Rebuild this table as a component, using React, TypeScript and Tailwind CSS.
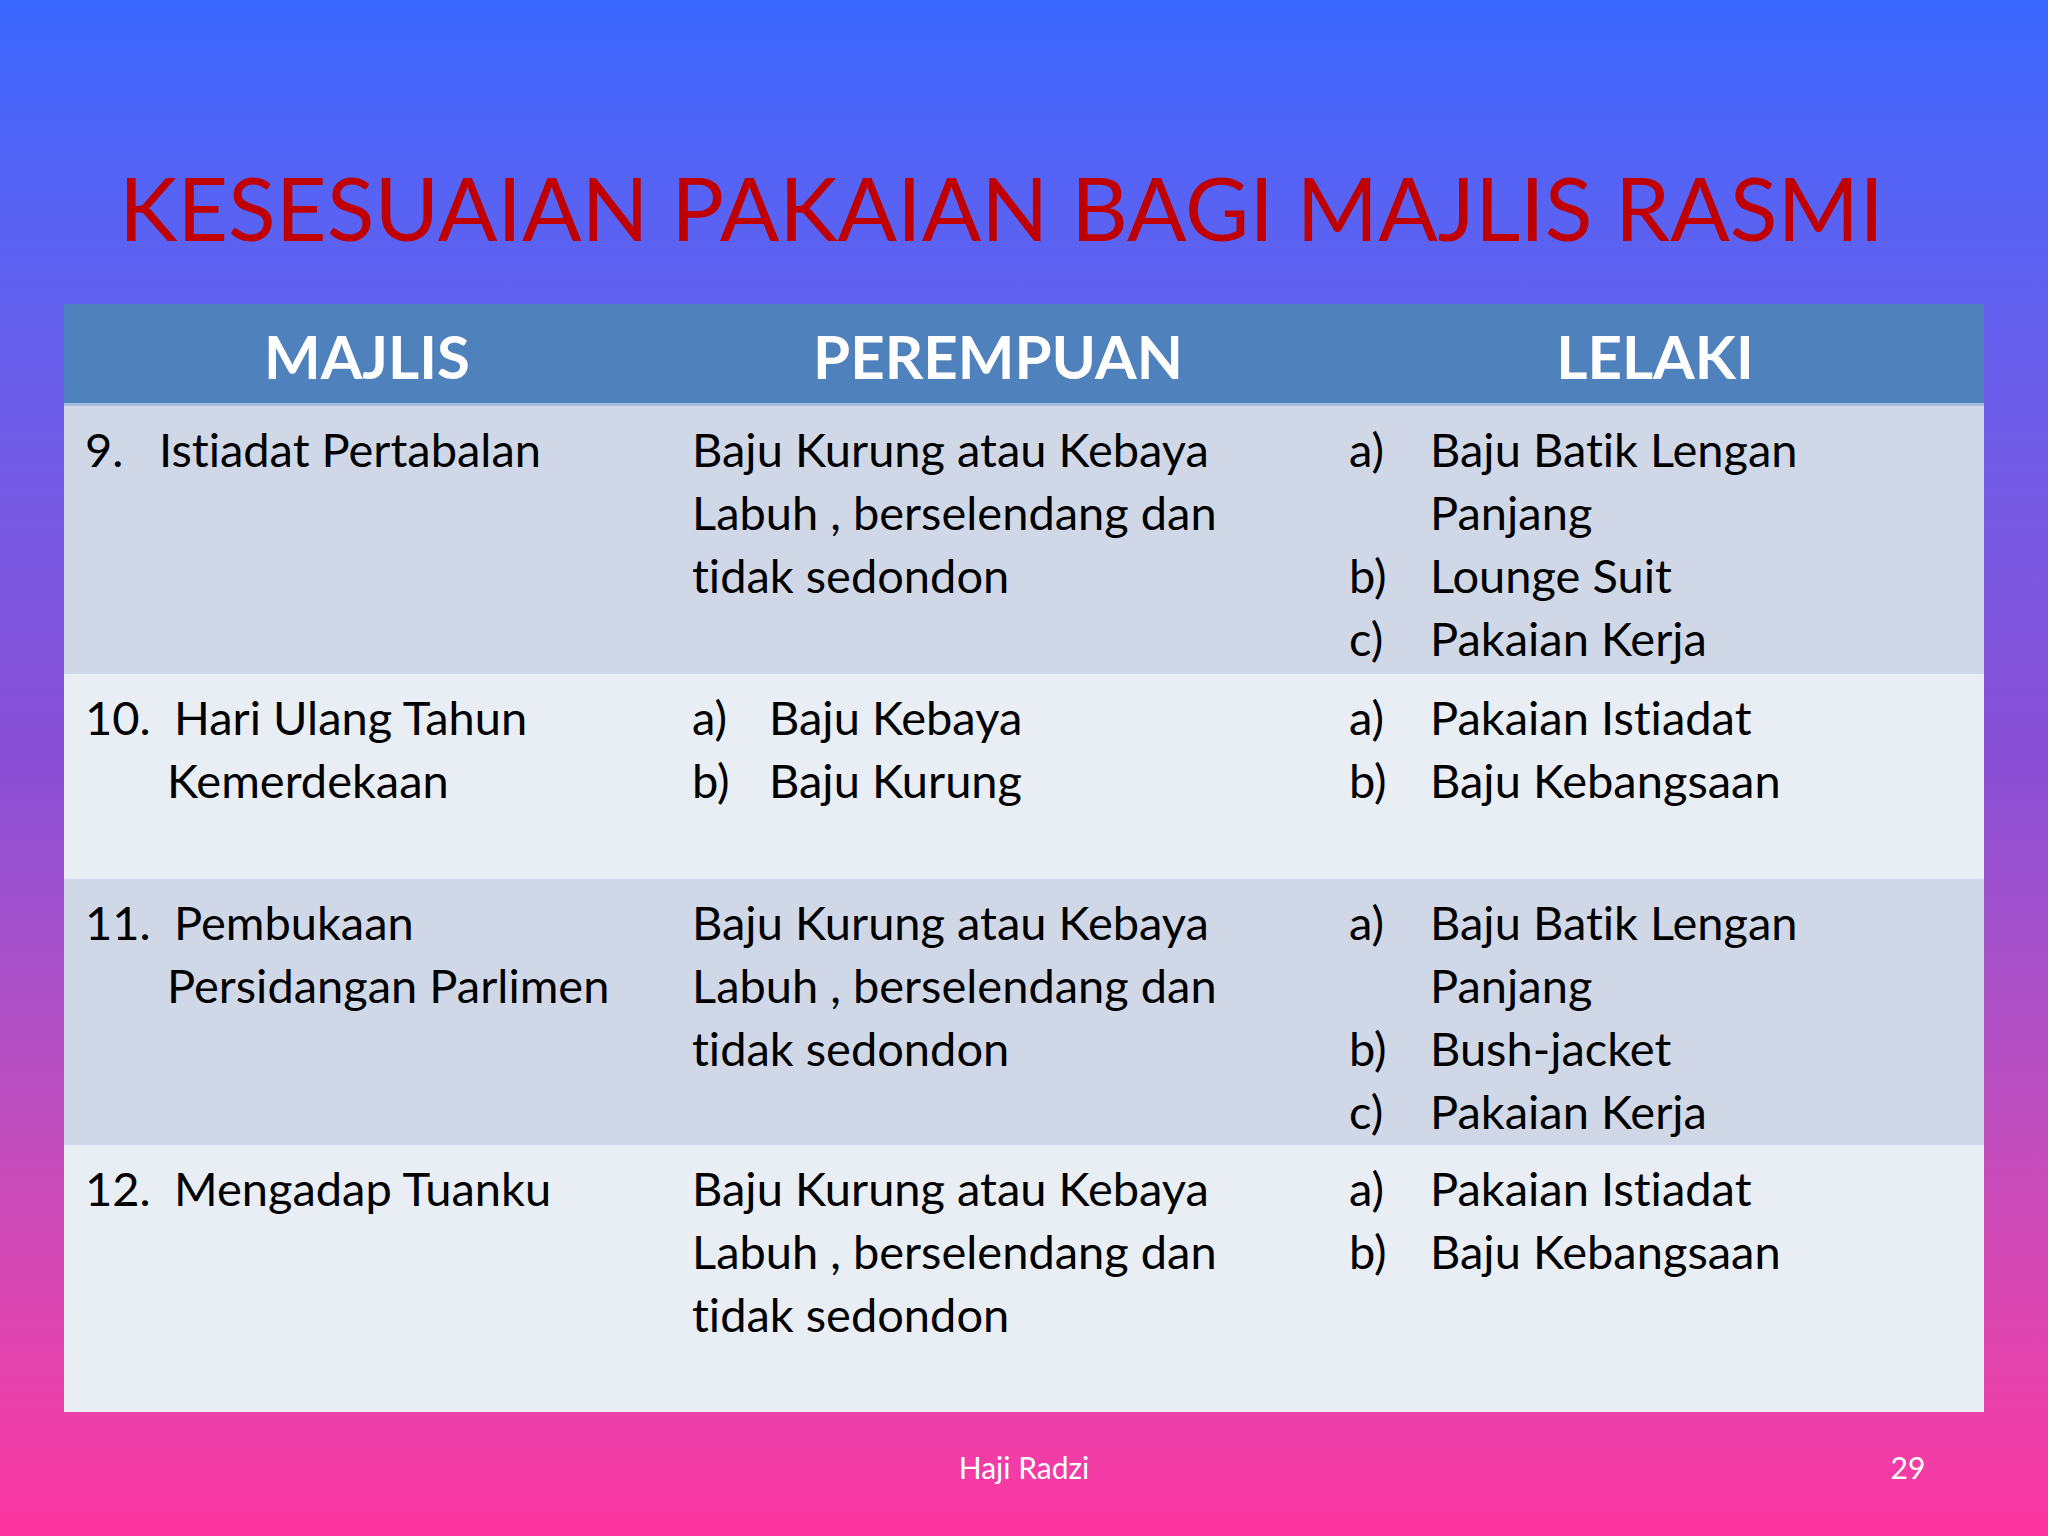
import React from "react";

const font = { fontFamily: "Lato, 'Open Sans', sans-serif" };

function Line({ children, indent = 0 }: { children: React.ReactNode; indent?: number }) {
  return <div className="whitespace-nowrap" style={indent ? { paddingLeft: indent } : undefined}>{children}</div>;
}

function Num({ n, w, children }: { n: string; w: string; children: React.ReactNode }) {
  return (
    <div className="flex whitespace-nowrap">
      <span className={w}>{n}</span>
      <span>{children}</span>
    </div>
  );
}

function Item2({ m, children }: { m: string; children: React.ReactNode }) {
  return (
    <div className="flex whitespace-nowrap">
      <span className="w-[77px] shrink-0">{m}</span>
      <div>{children}</div>
    </div>
  );
}

function Item3({ m, children }: { m: string; children: React.ReactNode }) {
  return (
    <div className="flex whitespace-nowrap">
      <span className="w-[81px] shrink-0">{m}</span>
      <div>{children}</div>
    </div>
  );
}

const cell1 = "pl-[21px] pt-[12px]";
const cell2 = "pl-[22px] pt-[12px]";
const cell3 = "pl-[23px] pt-[12px]";

function Kurung() {
  return (
    <>
      <Line>Baju Kurung atau Kebaya</Line>
      <Line>Labuh , berselendang dan</Line>
      <Line>tidak sedondon</Line>
    </>
  );
}

export default function App() {
  return (
    <div
      className="w-[2048px] h-[1536px] flex flex-col bg-gradient-to-b from-[#3a68ff] via-[#8a4fd5] to-[#fe34a0] overflow-hidden [font-variant-ligatures:none]"
      style={font}
    >
      <div className="h-[304px] flex items-start pl-[119px] pt-[157px]">
        <h1 className="text-[88px] leading-[100px] text-[#c00000] whitespace-nowrap">KESESUAIAN PAKAIAN BAGI MAJLIS RASMI</h1>
      </div>
      <div className="mx-[64px] w-[1920px] text-[47px] leading-[63px] text-black">
        <div className="grid grid-cols-[606px_656px_658px] h-[102px] bg-[#4f81bd] text-white font-bold text-[60px] items-center border-b-[3px] border-[#a7bde0] pt-[6px]">
          <div className="text-center">MAJLIS</div>
          <div className="text-center">PEREMPUAN</div>
          <div className="text-center">LELAKI</div>
        </div>
        <div className="grid grid-cols-[606px_656px_658px] h-[268px] bg-[#d0d8e8]">
          <div className={cell1}>
            <Num n="9." w="w-[74px]">Istiadat Pertabalan</Num>
          </div>
          <div className={cell2}>
            <Kurung />
          </div>
          <div className={cell3}>
            <Item3 m="a)">
              <Line>Baju Batik Lengan</Line>
              <Line>Panjang</Line>
            </Item3>
            <Item3 m="b)">Lounge Suit</Item3>
            <Item3 m="c)">Pakaian Kerja</Item3>
          </div>
        </div>
        <div className="grid grid-cols-[606px_656px_658px] h-[205px] bg-[#e9edf4]">
          <div className={cell1}>
            <Num n="10." w="w-[89px]">Hari Ulang Tahun</Num>
            <Line indent={82}>Kemerdekaan</Line>
          </div>
          <div className={cell2}>
            <Item2 m="a)">Baju Kebaya</Item2>
            <Item2 m="b)">Baju Kurung</Item2>
          </div>
          <div className={cell3}>
            <Item3 m="a)">Pakaian Istiadat</Item3>
            <Item3 m="b)">Baju Kebangsaan</Item3>
          </div>
        </div>
        <div className="grid grid-cols-[606px_656px_658px] h-[266px] bg-[#d0d8e8]">
          <div className={cell1}>
            <Num n="11." w="w-[89px]">Pembukaan</Num>
            <Line indent={82}>Persidangan Parlimen</Line>
          </div>
          <div className={cell2}>
            <Kurung />
          </div>
          <div className={cell3}>
            <Item3 m="a)">
              <Line>Baju Batik Lengan</Line>
              <Line>Panjang</Line>
            </Item3>
            <Item3 m="b)">Bush-jacket</Item3>
            <Item3 m="c)">Pakaian Kerja</Item3>
          </div>
        </div>
        <div className="grid grid-cols-[606px_656px_658px] h-[267px] bg-[#e9edf4]">
          <div className={cell1}>
            <Num n="12." w="w-[89px]">Mengadap Tuanku</Num>
          </div>
          <div className={cell2}>
            <Kurung />
          </div>
          <div className={cell3}>
            <Item3 m="a)">Pakaian Istiadat</Item3>
            <Item3 m="b)">Baju Kebangsaan</Item3>
          </div>
        </div>
      </div>
      <div className="relative flex-1 text-white text-[30px] leading-[36px]">
        <div className="absolute left-0 right-0 top-[37px] text-center">Haji Radzi</div>
        <div className="absolute left-[1880px] w-[56px] top-[37px] text-center">29</div>
      </div>
    </div>
  );
}
